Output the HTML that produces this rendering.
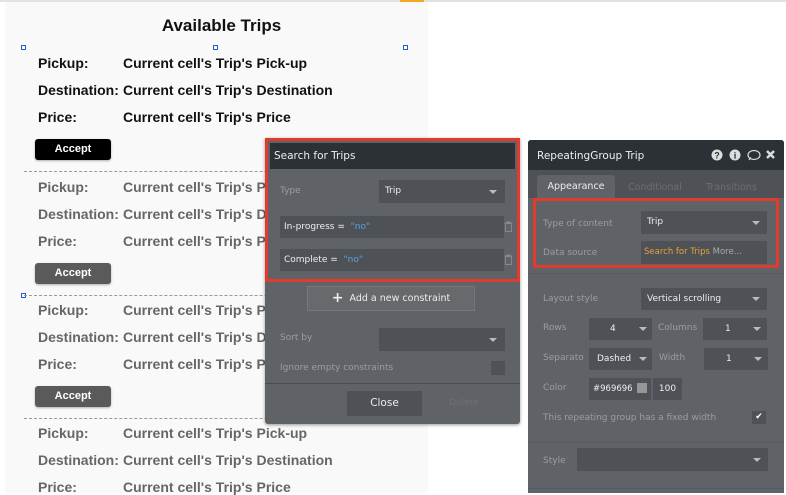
<!DOCTYPE html>
<html><head><style>
*{margin:0;padding:0;box-sizing:border-box}
body{width:786px;height:493px;overflow:hidden;background:#fff;position:relative;font-family:"Liberation Sans",Arial,sans-serif}
.a{position:absolute}
.canvas{left:5px;top:2px;width:423px;height:491px;background:#f9f9f9}
.t{position:absolute;font-weight:bold;font-size:14px;color:#111;white-space:nowrap}
.g{color:#666}
.btn{position:absolute;left:35px;width:76px;height:21px;border-radius:3px;color:#fff;font-weight:bold;font-size:11px;text-align:center;line-height:21px;box-shadow:0 1px 2px rgba(0,0,0,.3)}
.dash{position:absolute;left:24px;width:404px;border-top:1px dashed #999}
.h{position:absolute;width:5px;height:5px;border:1px solid #1a5fd6;background:#fff}
.ui{font-family:"DejaVu Sans","Liberation Sans",sans-serif;font-size:9px}
.fld{position:absolute;background:#4e5256;color:#eee;white-space:nowrap}
.lbl{position:absolute;color:#9a9ea2;white-space:nowrap}
.car{position:absolute;width:0;height:0;border-left:4px solid transparent;border-right:4px solid transparent;border-top:4px solid #bbb}
</style></head><body>
<div class="a" style="left:0;top:0;width:786px;height:2px;background:#e2e2e2"></div>
<div class="a" style="left:400px;top:0;width:24px;height:2px;background:#f5a623"></div>
<div class="a canvas"></div>
<div class="t" style="left:0;width:443px;text-align:center;top:16px;font-size:17px">Available Trips</div>
<div class="h" style="left:21px;top:45px"></div><div class="h" style="left:213px;top:45px"></div><div class="h" style="left:403px;top:45px"></div>
<div class="h" style="left:21px;top:293px"></div>

<div class="t" style="left:38px;top:55px">Pickup:</div><div class="t" style="left:123px;top:55px">Current cell's Trip's Pick-up</div>
<div class="t" style="left:38px;top:82px">Destination:</div><div class="t" style="left:123px;top:82px">Current cell's Trip's Destination</div>
<div class="t" style="left:38px;top:109px">Price:</div><div class="t" style="left:123px;top:109px">Current cell's Trip's Price</div>
<div class="btn" style="top:139px;background:#000">Accept</div>
<div class="dash" style="top:171px"></div>

<div class="t g" style="left:38px;top:179px">Pickup:</div><div class="t g" style="left:123px;top:179px">Current cell's Trip's Pick-up</div>
<div class="t g" style="left:38px;top:206px">Destination:</div><div class="t g" style="left:123px;top:206px">Current cell's Trip's Destination</div>
<div class="t g" style="left:38px;top:233px">Price:</div><div class="t g" style="left:123px;top:233px">Current cell's Trip's Price</div>
<div class="btn" style="top:263px;background:#5a5a5a">Accept</div>
<div class="dash" style="top:295px"></div>

<div class="t g" style="left:38px;top:302px">Pickup:</div><div class="t g" style="left:123px;top:302px">Current cell's Trip's Pick-up</div>
<div class="t g" style="left:38px;top:329px">Destination:</div><div class="t g" style="left:123px;top:329px">Current cell's Trip's Destination</div>
<div class="t g" style="left:38px;top:356px">Price:</div><div class="t g" style="left:123px;top:356px">Current cell's Trip's Price</div>
<div class="btn" style="top:386px;background:#5a5a5a">Accept</div>
<div class="dash" style="top:418px"></div>

<div class="t g" style="left:38px;top:425px">Pickup:</div><div class="t g" style="left:123px;top:425px">Current cell's Trip's Pick-up</div>
<div class="t g" style="left:38px;top:452px">Destination:</div><div class="t g" style="left:123px;top:452px">Current cell's Trip's Destination</div>
<div class="t g" style="left:38px;top:479px">Price:</div><div class="t g" style="left:123px;top:479px">Current cell's Trip's Price</div>

<!-- Search panel -->
<div class="a ui" style="left:265px;top:138px;width:255px;height:286px;background:#5f6367;border-radius:0 0 3px 3px;box-shadow:0 1px 3px rgba(0,0,0,.4)">
  <div class="a" style="left:5px;top:5px;width:245px;height:26px;background:#2b3135;color:#eee;font-size:10.5px;line-height:26px;padding-left:4px">Search for Trips</div>
  <div class="lbl" style="left:15px;top:48px">Type</div>
  <div class="fld" style="left:114px;top:42px;width:126px;height:23px;line-height:23px;padding-left:6px">Trip</div><div class="car" style="left:224px;top:52px"></div>
  <div class="fld" style="left:15px;top:78px;width:224px;height:22px;line-height:22px;padding-left:4px">In-progress = &nbsp;<span style="color:#5aa0e6">"no"</span></div>
  <div class="fld" style="left:15px;top:111px;width:224px;height:22px;line-height:22px;padding-left:4px">Complete = &nbsp;<span style="color:#5aa0e6">"no"</span></div>
  <svg class="a" style="left:239px;top:83px" width="9" height="11" viewBox="0 0 9 11"><path d="M0.5 2h8M3 2V1h3v1M1.5 2.5h6v8h-6z" fill="none" stroke="#888" stroke-width="1"/></svg>
  <svg class="a" style="left:239px;top:116px" width="9" height="11" viewBox="0 0 9 11"><path d="M0.5 2h8M3 2V1h3v1M1.5 2.5h6v8h-6z" fill="none" stroke="#888" stroke-width="1"/></svg>
  <div class="a" style="left:0;top:0;width:255px;height:144px;border:3px solid #e33a2e"></div>
  <div class="a" style="left:42px;top:148px;width:168px;height:25px;background:#67696c;border:1px solid #777;color:#eee;text-align:center;line-height:23px;font-size:9.5px"><b style="font-size:14px;vertical-align:-1px">+</b>&nbsp; Add a new constraint</div>
  <div class="lbl" style="left:15px;top:195px">Sort by</div>
  <div class="fld" style="left:114px;top:190px;width:126px;height:23px"></div><div class="car" style="left:224px;top:200px"></div>
  <div class="lbl" style="left:15px;top:225px">Ignore empty constraints</div>
  <div class="a" style="left:226px;top:223px;width:14px;height:14px;background:#4e5256"></div>
  <div class="a" style="left:0;top:245px;width:255px;border-top:1px solid #4a4d50"></div>
  <div class="fld" style="left:82px;top:253px;width:75px;height:25px;line-height:25px;text-align:center;font-size:10.5px;color:#eee">Close</div>
  <div class="a" style="left:184px;top:260px;color:#6d7175">Delete</div>
</div>

<!-- Property panel -->
<div class="a ui" style="left:528px;top:140px;width:256px;height:353px;background:#5f6367;border-radius:3px 3px 0 0;overflow:hidden">
  <div class="a" style="left:0;top:0;width:256px;height:30px;background:#2b3135;color:#eee;font-size:10.5px;line-height:32px;padding-left:9px">RepeatingGroup Trip</div>
  <svg class="a" style="left:183px;top:9px" width="70" height="13" viewBox="0 0 70 13">
    <circle cx="6" cy="6" r="5.5" fill="#ddd"/><text x="6" y="9.5" font-size="9" font-weight="bold" text-anchor="middle" fill="#2b3135" font-family="Liberation Sans">?</text>
    <circle cx="24" cy="6" r="5.5" fill="#ddd"/><text x="24" y="9.5" font-size="9" font-weight="bold" text-anchor="middle" fill="#2b3135" font-family="Liberation Serif">i</text>
    <ellipse cx="43" cy="6" rx="6" ry="4.5" fill="none" stroke="#ddd" stroke-width="1.2"/><path d="M38 11l2-2.5" stroke="#ddd" stroke-width="1.2"/>
    <path d="M56 2l7 7M63 2l-7 7" stroke="#ddd" stroke-width="2.4"/>
  </svg>
  <div class="a" style="left:0;top:30px;width:256px;height:28px;background:#4e5256"></div>
  <div class="a" style="left:9px;top:35px;width:78px;height:24px;background:#5f6367;border-radius:3px 3px 0 0;color:#eee;text-align:center;line-height:24px;font-size:9.5px">Appearance</div>
  <div class="a" style="left:100px;top:42px;color:#6a6e72;font-size:9.5px">Conditional</div>
  <div class="a" style="left:178px;top:42px;color:#6a6e72;font-size:9.5px">Transitions</div>
  <div class="lbl" style="left:15px;top:79px">Type of content</div>
  <div class="fld" style="left:113px;top:71px;width:126px;height:23px;line-height:23px;padding-left:6px">Trip</div><div class="car" style="left:224px;top:81px"></div>
  <div class="lbl" style="left:15px;top:108px">Data source</div>
  <div class="fld" style="left:113px;top:101px;width:126px;height:23px;line-height:23px;padding-left:3px;font-size:8.5px"><span style="color:#e8a23a">Search for Trips</span> <span style="color:#aaa">More...</span></div>
  <div class="a" style="left:5px;top:58px;width:246px;height:70px;border:3px solid #e33a2e"></div>
  <div class="a" style="left:0;top:133px;width:256px;border-top:1px solid #575b5f"></div>
  <div class="lbl" style="left:15px;top:154px">Layout style</div>
  <div class="fld" style="left:113px;top:148px;width:126px;height:22px;line-height:22px;padding-left:6px">Vertical scrolling</div><div class="car" style="left:224px;top:157px"></div>
  <div class="lbl" style="left:15px;top:183px">Rows</div>
  <div class="fld" style="left:61px;top:178px;width:63px;height:22px;line-height:22px;padding-left:21px">4</div><div class="car" style="left:111px;top:187px"></div>
  <div class="lbl" style="left:130px;top:183px">Columns</div>
  <div class="fld" style="left:175px;top:178px;width:64px;height:22px;line-height:22px;padding-left:22px">1</div><div class="car" style="left:225px;top:187px"></div>
  <div class="lbl" style="left:15px;top:213px">Separato</div>
  <div class="fld" style="left:61px;top:208px;width:63px;height:22px;line-height:22px;padding-left:8px">Dashed</div><div class="car" style="left:111px;top:217px"></div>
  <div class="lbl" style="left:131px;top:213px">Width</div>
  <div class="fld" style="left:176px;top:208px;width:64px;height:22px;line-height:22px;padding-left:22px">1</div><div class="car" style="left:226px;top:217px"></div>
  <div class="lbl" style="left:15px;top:243px">Color</div>
  <div class="fld" style="left:61px;top:238px;width:62px;height:22px;line-height:22px;padding-left:4px;font-size:8.5px">#969696</div>
  <div class="a" style="left:109px;top:243px;width:10px;height:10px;background:#969696"></div>
  <div class="fld" style="left:125px;top:238px;width:29px;height:22px;line-height:22px;text-align:center">100</div>
  <div class="lbl" style="left:15px;top:273px">This repeating group has a fixed width</div>
  <div class="a" style="left:224px;top:271px;width:14px;height:13px;background:#4e5256;color:#fff;font-size:9px;text-align:center;line-height:13px">✔</div>
  <div class="a" style="left:0;top:302px;width:256px;border-top:1px solid #575b5f"></div>
  <div class="lbl" style="left:15px;top:316px">Style</div>
  <div class="fld" style="left:49px;top:308px;width:191px;height:23px"></div><div class="car" style="left:225px;top:318px"></div>
  <div class="a" style="left:0;top:348px;width:256px;border-top:1px solid #575b5f"></div>
</div>
</body></html>
